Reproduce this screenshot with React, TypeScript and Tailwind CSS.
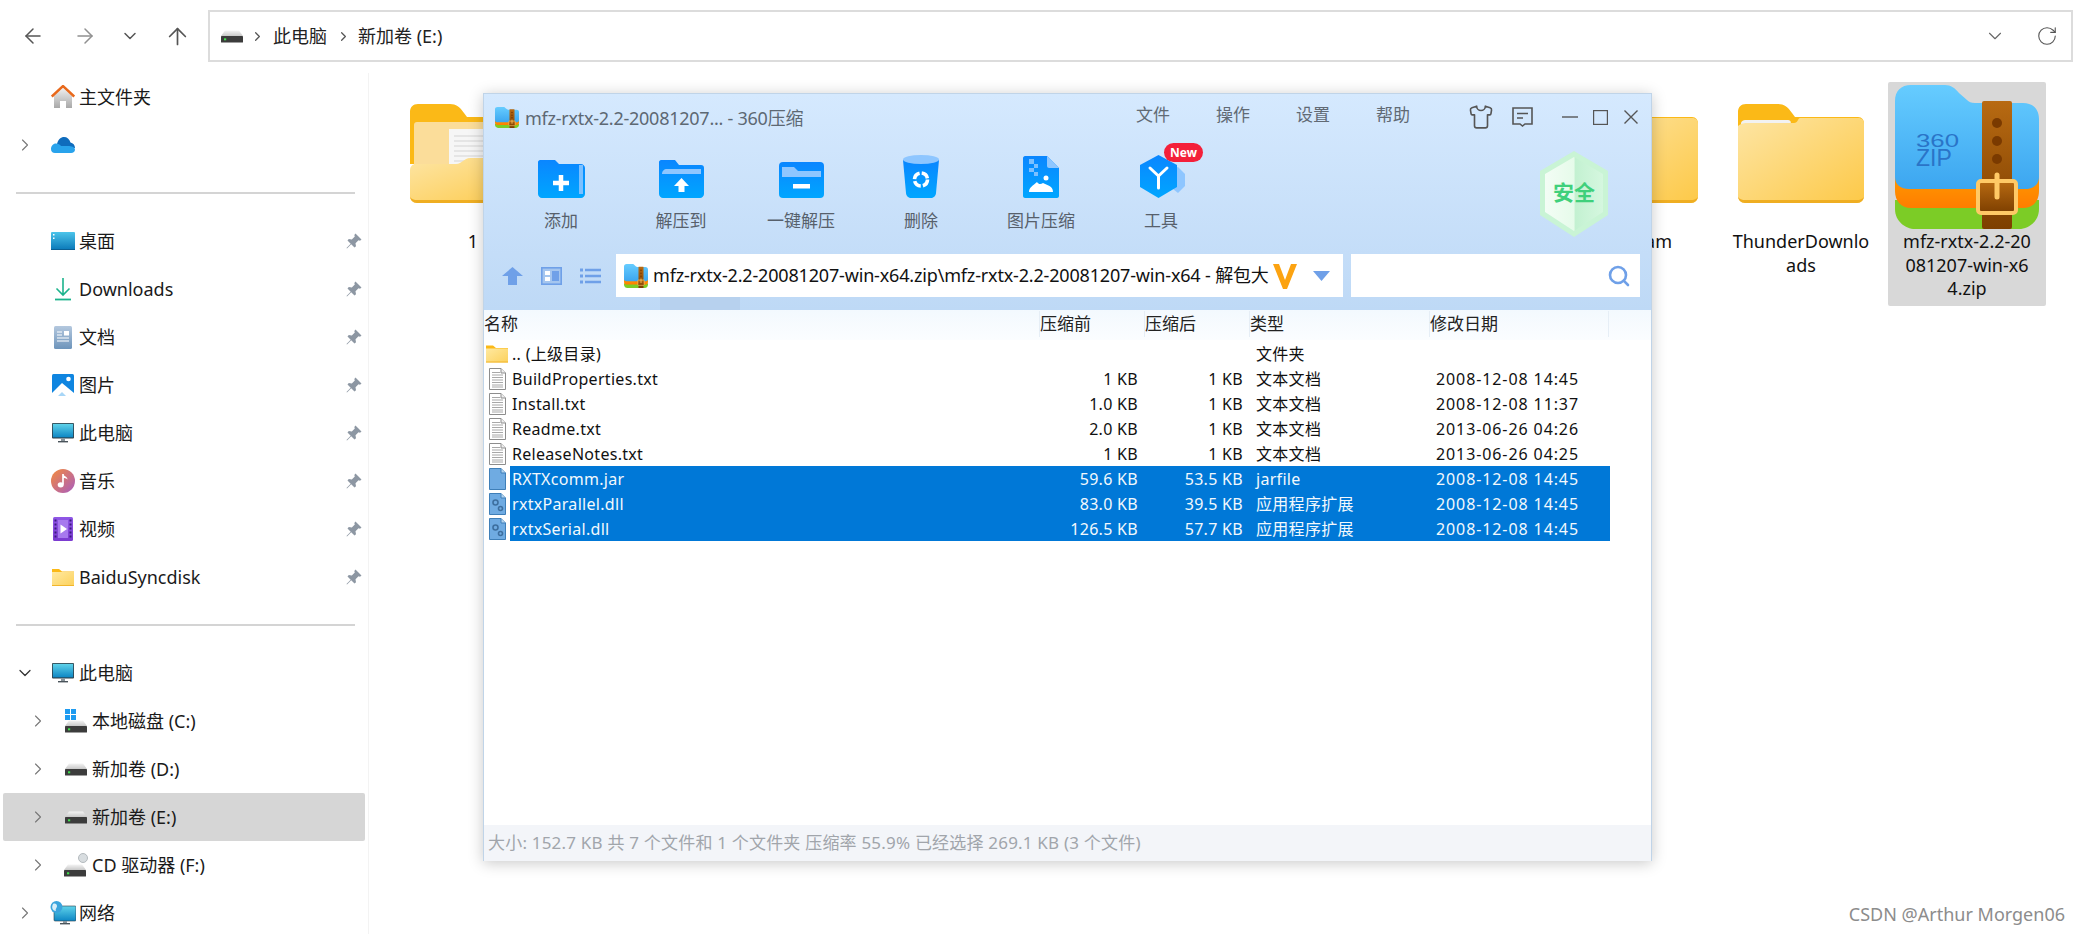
import React from "react";
import { ArrowLeft, ArrowRight, ArrowUp, ChevronDown, ChevronRight, RotateCw, Shirt, Search } from "lucide-react";

const Drive = () => (
  <svg width="22" height="13" viewBox="0 0 22 13">
    <defs><linearGradient id="drv" x1="0" y1="0" x2="0" y2="1"><stop offset="0" stopColor="#f4f4f4" /><stop offset="1" stopColor="#c8c8c8" /></linearGradient></defs>
    <path d="M4 0.5H18L22 6H0Z" fill="url(#drv)" />
    <rect x="0" y="6" width="22" height="6.5" rx="0.6" fill="#3c3c3c" />
    <rect x="3" y="8.3" width="2.2" height="2" fill="#3fe04d" />
  </svg>
);

const Home = () => (
  <svg width="24" height="24" viewBox="0 0 24 24">
    <defs><linearGradient id="hm" x1="0" y1="0" x2="0" y2="1"><stop offset="0" stopColor="#f0f0f0" /><stop offset="1" stopColor="#a8a8a8" /></linearGradient></defs>
    <path d="M12 3L21 11V23H15V16H9V23H3V11Z" fill="url(#hm)" />
    <path d="M0.8 11.5L12 1L23.2 11.5" fill="none" stroke="#e8691c" strokeWidth="2.4" />
  </svg>
);

const OneDrive = () => (
  <svg width="24" height="16" viewBox="0 0 24 16">
    <path d="M6 7C7 2.5 10 0 13 0C16 0 18.5 2 19.5 5.5C22 6 24 8 24 11L12 12Z" fill="#0f6cbd" />
    <path d="M0 12C0 9 2 6.5 5 6.5C7 6.5 9 7.5 10 9L17 9C20 9 24 10 24 12.5C24 14.5 22.5 16 20 16H4C1.5 16 0 14.5 0 12Z" fill="#29a3ec" />
  </svg>
);

const Desktop = () => (
  <svg width="24" height="18" viewBox="0 0 24 18">
    <defs><linearGradient id="dsk" x1="0" y1="0" x2="0" y2="1"><stop offset="0" stopColor="#4cc4ea" /><stop offset="1" stopColor="#0a78b8" /></linearGradient></defs>
    <rect width="24" height="18" rx="1" fill="url(#dsk)" />
    <rect x="2" y="2" width="1.5" height="1.5" fill="#fff" />
    <rect x="2" y="5.5" width="1.5" height="1.5" fill="#fff" />
    <rect x="0" y="17" width="24" height="1" fill="#0a5f94" />
  </svg>
);

const Download = () => (
  <svg width="24" height="24" viewBox="0 0 24 24" fill="none" stroke="#1cb38c" strokeWidth="1.6">
    <path d="M12 1V18M5.5 11.5L12 18L18.5 11.5" />
    <path d="M4 22.5H20" strokeWidth="1.8" />
  </svg>
);

const Docs = () => (
  <svg width="18" height="23" viewBox="0 0 18 23">
    <defs><linearGradient id="doc" x1="0" y1="0" x2="0" y2="1"><stop offset="0" stopColor="#b4c8de" /><stop offset="1" stopColor="#6d94bb" /></linearGradient></defs>
    <rect width="18" height="23" rx="1.5" fill="url(#doc)" />
    <path d="M3 6H8M3 9H8M3 12H15M3 15H15" stroke="#fff" strokeWidth="1.1" />
    <rect x="10" y="5" width="5" height="4.5" fill="#fff" />
  </svg>
);

const Pictures = () => (
  <svg width="22" height="22" viewBox="0 0 22 22">
    <rect width="22" height="22" rx="1.5" fill="#0f85e0" />
    <circle cx="16.5" cy="5" r="2.3" fill="#fff" />
    <path d="M0 19L10 9L22 19V22H0Z" fill="#fff" />
    <path d="M6 22L10 18L14 22Z" fill="#a7d6f7" />
  </svg>
);

const Computer = () => (
  <svg width="22" height="20" viewBox="0 0 22 20">
    <defs><linearGradient id="pc" x1="0" y1="0" x2="0" y2="1"><stop offset="0" stopColor="#5fd3ea" /><stop offset="1" stopColor="#0d86c4" /></linearGradient></defs>
    <rect x="0" y="0" width="22" height="15.5" rx="1" fill="#2d3c46" />
    <rect x="0.8" y="0.8" width="20.4" height="13.6" fill="url(#pc)" />
    <rect x="9" y="15.5" width="4" height="2.5" fill="#8a949b" />
    <rect x="6" y="18" width="10" height="1.4" fill="#4a545b" />
  </svg>
);

const Music = () => (
  <svg width="24" height="24" viewBox="0 0 24 24">
    <defs><linearGradient id="mus" x1="0" y1="0" x2="1" y2="1"><stop offset="0" stopColor="#f58b3c" /><stop offset="1" stopColor="#a85cc0" /></linearGradient></defs>
    <circle cx="12" cy="12" r="12" fill="url(#mus)" />
    <path d="M12 5V15.5" stroke="#fff" strokeWidth="1.7" />
    <path d="M12 5C13 7.5 16.5 7.5 16.5 10.5C15.5 9 13.5 9 12 9Z" fill="#fff" />
    <ellipse cx="9.7" cy="15.8" rx="3" ry="2.6" fill="#fff" />
  </svg>
);

const Video = () => (
  <svg width="20" height="24" viewBox="0 0 20 24">
    <defs><linearGradient id="vid" x1="0" y1="0" x2="0" y2="1"><stop offset="0" stopColor="#8f57e6" /><stop offset="1" stopColor="#7b3bd0" /></linearGradient></defs>
    <rect width="20" height="24" rx="1.5" fill="url(#vid)" />
    <path d="M1.5 3.5H3.5M1.5 7.5H3.5M1.5 11.5H3.5M1.5 15.5H3.5M1.5 19.5H3.5M16.5 3.5H18.5M16.5 7.5H18.5M16.5 11.5H18.5M16.5 15.5H18.5M16.5 19.5H18.5" stroke="#3c1a80" strokeWidth="2" />
    <rect x="5" y="3" width="10" height="18" fill="#a77aee" />
    <path d="M7.5 7.5L14 12L7.5 16.5Z" fill="#fff" />
  </svg>
);

const SmallFolder = ({ w = 22, h = 17 }: { w?: number; h?: number }) => (
  <svg width={w} height={h} viewBox="0 0 22 17">
    <defs><linearGradient id="sf" x1="0" y1="0" x2="1" y2="1"><stop offset="0" stopColor="#ffe9a0" /><stop offset="1" stopColor="#fcd15c" /></linearGradient></defs>
    <path d="M0 0H7L10 2.5H22V4H0Z" fill="#fbb917" />
    <rect y="3" width="22" height="14" fill="url(#sf)" />
    <rect y="16" width="22" height="1" fill="#f2b62c" />
  </svg>
);

const WinDrive = () => (
  <div className="relative w-[22px] h-[24px] flex items-end">
    <Drive />
    <div className="absolute left-0 top-0 grid grid-cols-2 gap-[1px] w-[11px]">
      <span className="h-[5px] bg-[#1e9bf0]" /><span className="h-[5px] bg-[#1e9bf0]" />
      <span className="h-[5px] bg-[#1e9bf0]" /><span className="h-[5px] bg-[#1e9bf0]" />
    </div>
  </div>
);

const CdDrive = () => (
  <div className="relative w-[24px] h-[24px] flex items-end">
    <Drive />
    <span className="absolute right-0 top-0 w-[10px] h-[10px] rounded-full bg-[#d8dde0] border border-[#b4babe]" />
  </div>
);

const Network = () => (
  <svg width="26" height="24" viewBox="0 0 26 24">
    <defs><linearGradient id="net" x1="0" y1="0" x2="0" y2="1"><stop offset="0" stopColor="#5fd3ea" /><stop offset="1" stopColor="#0d86c4" /></linearGradient></defs>
    <rect x="4" y="5" width="22" height="15" rx="1" fill="url(#net)" stroke="#2d3c46" strokeWidth="0.6" />
    <rect x="13" y="20" width="4" height="2" fill="#8a949b" />
    <rect x="10" y="22" width="10" height="1.4" fill="#4a545b" />
    <circle cx="6.5" cy="6" r="6" fill="#3ba4dc" />
    <path d="M3 3C5 2 7 3 7 5S5 8 6 10C3 10 1 7 3 3Z" fill="#d9eef8" />
  </svg>
);

const Pin = () => (
  <svg width="16" height="16" viewBox="0 0 16 16" className="shrink-0">
    <path d="M9.5 0.5L15.5 6.5L14 7.7L12.5 7.2L9.5 10.2L10 13.2L8.5 14.5L5.2 11.2L1 15.5L0.5 15L4.7 10.7L1.5 7.5L2.8 6L5.8 6.5L8.8 3.5L8.3 2Z" fill="#8d97a3" />
  </svg>
);

type Item = { icon: React.ReactNode; label: string; chev?: "r" | "d"; depth?: boolean; pin?: boolean; sel?: boolean };

const SideRow = ({ icon, label, chev, depth, pin, sel }: Item) => (
  <div className={sel ? "h-12 mx-[3px] pr-[3px] flex items-center rounded-[2px] bg-[#d6d6d6]" : "h-12 mx-[3px] pr-[3px] flex items-center"}>
    <div className={depth ? "w-[57px] pl-[13px] flex justify-center shrink-0" : "w-[44px] flex justify-center shrink-0"}>
      {chev === "r" && <ChevronRight size={20} strokeWidth={1.3} className="text-[#777]" />}
      {chev === "d" && <ChevronDown size={20} strokeWidth={1.5} className="text-[#333]" />}
    </div>
    <div className="w-[26px] ml-[3px] flex justify-center items-center shrink-0">{icon}</div>
    <span className="ml-[3px] text-[18px] text-[#1a1a1a] whitespace-nowrap">{label}</span>
    {pin && <span className="ml-auto"><Pin /></span>}
  </div>
);

const Sep = () => (
  <div className="h-12 flex items-center pl-[16px] pr-[13px]">
    <div className="h-[2px] w-full bg-[#d4d4d4]" />
  </div>
);

const Sidebar = () => (
  <div className="w-[369px] shrink-0 border-r border-[#f3f3f3]">
    <SideRow icon={<Home />} label="主文件夹" />
    <SideRow icon={<OneDrive />} label="" chev="r" />
    <Sep />
    <SideRow icon={<Desktop />} label="桌面" pin />
    <SideRow icon={<Download />} label="Downloads" pin />
    <SideRow icon={<Docs />} label="文档" pin />
    <SideRow icon={<Pictures />} label="图片" pin />
    <SideRow icon={<Computer />} label="此电脑" pin />
    <SideRow icon={<Music />} label="音乐" pin />
    <SideRow icon={<Video />} label="视频" pin />
    <SideRow icon={<SmallFolder />} label="BaiduSyncdisk" pin />
    <Sep />
    <SideRow icon={<Computer />} label="此电脑" chev="d" />
    <SideRow icon={<WinDrive />} label="本地磁盘 (C:)" chev="r" depth />
    <SideRow icon={<Drive />} label="新加卷 (D:)" chev="r" depth />
    <SideRow icon={<Drive />} label="新加卷 (E:)" chev="r" depth sel />
    <SideRow icon={<CdDrive />} label="CD 驱动器 (F:)" chev="r" depth />
    <SideRow icon={<Network />} label="网络" chev="r" />
  </div>
);

const BigFolder = ({ id, paper }: { id: string; paper?: boolean }) => (
  <svg width="126" height="99" viewBox="0 0 126 99" className="mb-[7px]">
    <defs>
      <linearGradient id={id} x1="0" y1="0" x2="1" y2="1"><stop offset="0" stopColor="#fde5a4" /><stop offset="1" stopColor="#fdc948" /></linearGradient>
    </defs>
    <path d="M0 8C0 3 3 0 8 0H40C46 0 50 3 54 9L57 13H120C124 13 126 16 126 20V60H0Z" fill="#fbb917" />
    {paper ? (
      <>
        <rect x="4" y="18" width="122" height="50" rx="3" fill="#fbdd9a" />
        <rect x="39" y="25" width="87" height="45" fill="#f6f6f6" />
        <path d="M44 32H126M44 37H126M44 42H126M44 47H126M44 52H126M44 57H126M44 62H126" stroke="#d4d4d4" />
        <path d="M0 66C0 63 2 60 6 60H46C52 60 54 54 60 54H120C124 54 126 56 126 60V92C126 96 123 99 119 99H7C3 99 0 96 0 92Z" fill={`url(#${id})`} />
      </>
    ) : (
      <>
        <path d="M3 20C3 17 5 16 8 16H50C54 16 54 22 48 23H3Z" fill="#f2f2f2" />
        <path d="M0 22C4 19 6 19 10 19H56C60 19 60 14 62 14H120C124 14 126 16 126 20V92C126 96 123 99 119 99H7C3 99 0 96 0 92Z" fill={`url(#${id})`} />
      </>
    )}
    <path d="M0 92C0 96 3 99 7 99H119C123 99 126 96 126 92C126 94 123 96 119 96H7C3 96 0 94 0 92Z" fill="#efae22" />
  </svg>
);

const Zip = ({ id, size, text, h }: { id: string; size: number; text?: boolean; h?: number }) => (
  <svg width={size} height={h ?? size} viewBox="0 0 144 144" preserveAspectRatio="none">
    <defs>
      <linearGradient id={id + "b"} x1="0" y1="0" x2="0" y2="1"><stop offset="0" stopColor="#66ccff" /><stop offset="1" stopColor="#3ca6f0" /></linearGradient>
      <linearGradient id={id + "o"} x1="0" y1="0" x2="0" y2="1"><stop offset="0" stopColor="#ff9d00" /><stop offset="1" stopColor="#ff7d00" /></linearGradient>
      <linearGradient id={id + "k"} x1="0" y1="0" x2="0" y2="1"><stop offset="0" stopColor="#b86a12" /><stop offset="1" stopColor="#7d3f00" /></linearGradient>
    </defs>
    <path d="M0 115H144V124C144 136 134 144 124 144H20C10 144 0 136 0 124Z" fill="#7ccc26" />
    <path d="M0 85H144V106C144 116 138 123 128 123H16C6 123 0 116 0 106Z" fill={`url(#${id}o)`} />
    <path d="M0 16C0 6 6 0 16 0H50C56 0 60 3 64 8L72 15C74 17 76 18 80 18H128C138 18 144 24 144 34V92C144 100 138 104 130 104H14C6 104 0 100 0 92Z" fill={`url(#${id}b)`} />
    <rect x="87" y="16" width="30" height="128" rx="2" fill={`url(#${id}k)`} />
    <circle cx="102" cy="38" r="5" fill="#7a3a00" />
    <circle cx="102" cy="56" r="5" fill="#7a3a00" />
    <circle cx="102" cy="74" r="5" fill="#7a3a00" />
    <rect x="83" y="96" width="38" height="32" rx="3" fill={`url(#${id}k)`} stroke="#ffc966" strokeWidth="4" />
    <path d="M102 90V112" stroke="#ffc966" strokeWidth="5" strokeLinecap="round" />
    {text && (
      <g fill="#2a74c8" fontFamily="'Liberation Sans', sans-serif">
        <text x="21" y="62" fontSize="18" fontWeight="400" textLength="43" lengthAdjust="spacingAndGlyphs">360</text>
        <text x="21" y="81" fontSize="23" fontWeight="400">ZIP</text>
      </g>
    )}
  </svg>
);

const FileItem = ({ icon, lines, sel }: { icon: React.ReactNode; lines: string[]; sel?: boolean }) => (
  <div className={sel ? "w-[158px] h-[224px] shrink-0 flex flex-col items-center pt-[3px] bg-[#d8d8d8] rounded-[2px]" : "w-[158px] h-[224px] shrink-0 flex flex-col items-center pt-[3px]"}>
    <div className="h-[144px] flex items-center justify-center">{icon}</div>
    <div className="mt-[1px] text-[18px] leading-[23.5px] text-[#111] text-center whitespace-nowrap">
      {lines.map((l) => <div key={l}>{l}</div>)}
    </div>
  </div>
);

const Content = () => (
  <div className="flex-1 pt-[9px] pl-[25px] flex gap-[8px] overflow-hidden">
    <FileItem icon={<BigFolder id="f1" paper />} lines={["1"]} />
    <div className="w-[988px] shrink-0" />
    <FileItem icon={<BigFolder id="f2" />} lines={["Program"]} />
    <FileItem icon={<BigFolder id="f3" />} lines={["ThunderDownlo", "ads"]} />
    <FileItem icon={<Zip id="z1" size={144} text />} lines={["mfz-rxtx-2.2-20", "081207-win-x6", "4.zip"]} sel />
  </div>
);

const grad = (id: string) => (
  <defs><linearGradient id={id} x1="0" y1="0" x2="0" y2="1"><stop offset="0" stopColor="#0a86ff" /><stop offset="1" stopColor="#00a6ff" /></linearGradient></defs>
);

const TAdd = () => (
  <svg width="47" height="38" viewBox="0 0 47 38">{grad("ta")}
    <path d="M2 0H17L21 4H43C45 4 47 6 47 8V34C47 36 45 38 43 38H4C2 38 0 36 0 34V2C0 1 1 0 2 0Z" fill="url(#ta)" />
    <rect x="41" y="5" width="4" height="29" fill="#7cc0ff" />
    <path d="M23 15V31M15 23H31" stroke="#fff" strokeWidth="4.5" />
  </svg>
);
const TExtract = () => (
  <svg width="45" height="38" viewBox="0 0 45 38">{grad("te")}
    <path d="M2 0H16L20 5H42C44 5 45 6 45 8V34C45 36 43 38 41 38H4C2 38 0 36 0 34V2C0 1 1 0 2 0Z" fill="url(#te)" />
    <path d="M3 14C3 11 5 9 8 9H42V14Z" fill="#8ec6ff" />
    <path d="M22.5 18L30 26H25.5V32H19.5V26H15Z" fill="#fff" />
  </svg>
);
const TOneKey = () => (
  <svg width="45" height="36" viewBox="0 0 45 36">{grad("to")}
    <rect width="45" height="36" rx="4" fill="url(#to)" />
    <path d="M3 5H15L19 9H42V15H3Z" fill="#8ec6ff" />
    <rect x="14" y="22" width="17" height="4.5" fill="#fff" />
  </svg>
);
const TDelete = () => (
  <svg width="36" height="43" viewBox="0 0 36 43">{grad("td")}
    <path d="M0 5H36L33 38C33 41 30 43 28 43H8C6 43 3 41 3 38Z" fill="url(#td)" />
    <ellipse cx="18" cy="4.5" rx="18" ry="4.5" fill="#8ec6ff" />
    <circle cx="18" cy="24.5" r="6.5" fill="none" stroke="#fff" strokeWidth="3.6" strokeDasharray="8 2.2" />
  </svg>
);
const TImage = () => (
  <svg width="36" height="42" viewBox="0 0 36 42">{grad("ti")}
    <path d="M2 0H24L36 12V40C36 41 35 42 34 42H2C1 42 0 41 0 40V2C0 1 1 0 2 0Z" fill="url(#ti)" />
    <path d="M24 0L36 12H26C25 12 24 11 24 10Z" fill="#8ec6ff" />
    <path d="M6 3H11V8H6ZM11 8H15V12H11ZM6 12H11V16H6ZM11 16H15V20H11Z" fill="#7cc0ff" />
    <path d="M6 36C6 31 10 30 14 26C16 29 18 28 20 27C24 29 30 30 30 36Z" fill="#fff" />
    <circle cx="23" cy="22" r="2.5" fill="#fff" />
  </svg>
);
const TTool = () => (
  <svg width="46" height="43" viewBox="0 0 46 43" className="ml-[4px]">{grad("tt")}
    <path d="M28 16L38 12L45 19V31L38 38L28 30Z" fill="#8ec6ff" />
    <path d="M18.5 0L37 10V32L18.5 43L0 32V10Z" fill="url(#tt)" />
    <path d="M18.5 21L10 13M18.5 21L27 13M18.5 21V33" stroke="#fff" strokeWidth="3" fill="none" strokeLinecap="round" />
  </svg>
);

const Tool = ({ icon, label, badge }: { icon: React.ReactNode; label: string; badge?: boolean }) => (
  <div className="w-[120px] flex flex-col items-center shrink-0">
    <div className="relative h-[42px] flex items-end justify-center">
      {icon}
      {badge && (
        <span className="absolute -top-[13px] left-[28px] w-[39px] h-[19px] rounded-full bg-[#f4203a] text-white text-[12px] leading-[19px] text-center font-bold">New</span>
      )}
    </div>
    <div className="mt-[11px] h-[25px] leading-[24px] text-[17px] text-[#57606b] whitespace-nowrap">{label}</div>
  </div>
);

const Shield = () => (
  <svg width="68" height="86" viewBox="0 0 68 86" className="-mt-[5px] -mb-[3px] shrink-0">
    <defs>
      <linearGradient id="sh" x1="0" y1="0" x2="1" y2="0"><stop offset="0" stopColor="#f3fdf5" /><stop offset="0.5" stopColor="#e6fbea" /><stop offset="0.52" stopColor="#c3f1d1" /><stop offset="1" stopColor="#d5f7df" /></linearGradient>
    </defs>
    <path d="M34 0L68 20V64L34 86L0 64V20Z" fill="#c9f4d5" />
    <path d="M34 6L63 23V61L34 80L5 61V23Z" fill="url(#sh)" />
    <text x="34" y="49" textAnchor="middle" fontSize="21" fontWeight="700" fill="#3fd07b">安全</text>
  </svg>
);

const ChatIcon = () => (
  <svg width="21" height="22" viewBox="0 0 21 22" fill="none" stroke="#555" strokeWidth="1.6">
    <path d="M1 2H20V18H13L10.5 20L8 18H1Z" />
    <path d="M5 7.5H16M5 12H11" />
  </svg>
);

const FileIcon = ({ kind }: { kind: "txt" | "jar" | "dll" }) => {
  const sel = kind !== "txt";
  return (
    <svg width="17" height="22" viewBox="0 0 17 22">
      <path d="M0.5 0.5H12L16.5 5V21.5H0.5Z" fill={sel ? "#6fabe2" : "#fff"} stroke={sel ? "#3f7fb8" : "#8d8d8d"} />
      <path d="M12 0.5V5H16.5" fill={sel ? "#b5d5f0" : "#eee"} stroke={sel ? "#3f7fb8" : "#8d8d8d"} />
      {kind === "txt" && <path d="M3 4.5H11M3 7H14M3 9.5H14M3 12H14M3 14.5H14M3 17H14M3 19H14" stroke="#a8a8a8" />}
      {kind === "dll" && (
        <g fill="none" stroke="#3d6f9f" strokeWidth="1.6">
          <circle cx="6.5" cy="9.5" r="2.5" />
          <circle cx="11.5" cy="15.5" r="2" />
        </g>
      )}
    </svg>
  );
};

const rows: { kind: "dir" | "txt" | "jar" | "dll"; name: string; a: string; b: string; t: string; d: string; sel?: boolean }[] = [
  { kind: "dir", name: ".. (上级目录)", a: "", b: "", t: "文件夹", d: "" },
  { kind: "txt", name: "BuildProperties.txt", a: "1 KB", b: "1 KB", t: "文本文档", d: "2008-12-08 14:45" },
  { kind: "txt", name: "Install.txt", a: "1.0 KB", b: "1 KB", t: "文本文档", d: "2008-12-08 11:37" },
  { kind: "txt", name: "Readme.txt", a: "2.0 KB", b: "1 KB", t: "文本文档", d: "2013-06-26 04:26" },
  { kind: "txt", name: "ReleaseNotes.txt", a: "1 KB", b: "1 KB", t: "文本文档", d: "2013-06-26 04:25" },
  { kind: "jar", name: "RXTXcomm.jar", a: "59.6 KB", b: "53.5 KB", t: "jarfile", d: "2008-12-08 14:45", sel: true },
  { kind: "dll", name: "rxtxParallel.dll", a: "83.0 KB", b: "39.5 KB", t: "应用程序扩展", d: "2008-12-08 14:45", sel: true },
  { kind: "dll", name: "rxtxSerial.dll", a: "126.5 KB", b: "57.7 KB", t: "应用程序扩展", d: "2008-12-08 14:45", sel: true },
];

const ListRow = (r: (typeof rows)[number]) => (
  <div className="flex h-[25px] items-center">
    <div className="w-[26px] shrink-0 flex justify-center items-center">
      {r.kind === "dir" ? <SmallFolder w={22} h={18} /> : <FileIcon kind={r.kind} />}
    </div>
    <div className={r.sel ? "flex h-[25px] items-center w-[1100px] bg-[#0078d7] text-[#f2f8fd]" : "flex h-[25px] items-center w-[1100px] text-[#111]"}>
      <div className="w-[500px] pl-[2px] whitespace-nowrap">{r.name}</div>
      <div className="w-[128px] text-right whitespace-nowrap">{r.a}</div>
      <div className="w-[105px] text-right whitespace-nowrap">{r.b}</div>
      <div className="w-[193px] pl-[13px] whitespace-nowrap">{r.t}</div>
      <div className="w-[174px] whitespace-nowrap tracking-[0.9px]">{r.d}</div>
    </div>
  </div>
);

const Window360 = () => (
  <div className="absolute left-[483px] top-[93px] w-[1169px] h-[768px] flex flex-col border-x border-t border-[#c0d4e8] bg-white shadow-[0_2px_14px_rgba(0,0,0,0.22)]">
    <div className="bg-gradient-to-b from-[#d5e9fe] to-[#bed9f6]">
      <div className="h-[46px] pl-[11px] flex items-center">
        <Zip id="z2" size={24} h={21} />
        <span className="ml-[6px] mt-[3px] text-[18px] tracking-[-0.25px] text-[#5d6873] whitespace-nowrap">mfz-rxtx-2.2-20081207... - 360压缩</span>
        <div className="ml-auto flex items-center mb-[4px] text-[17px] text-[#616a74]">
          {["文件", "操作", "设置", "帮助"].map((m) => <span key={m} className="w-[80px]">{m}</span>)}
        </div>
        <Shirt size={26} strokeWidth={1.5} className="ml-[12px] text-[#555] shrink-0" />
        <span className="ml-[18px]"><ChatIcon /></span>
        <svg width="16" height="16" viewBox="0 0 16 16" className="ml-[29px] shrink-0" fill="none" stroke="#555" strokeWidth="1.4"><path d="M0 8H16" /></svg>
        <svg width="15" height="15" viewBox="0 0 15 15" className="ml-[15px] shrink-0" fill="none" stroke="#555" strokeWidth="1.2"><rect x="0.6" y="0.6" width="13.8" height="13.8" /></svg>
        <svg width="14" height="14" viewBox="0 0 14 14" className="ml-[16px] mr-[13px] shrink-0" fill="none" stroke="#555" strokeWidth="1.4"><path d="M0.5 0.5L13.5 13.5M13.5 0.5L0.5 13.5" /></svg>
      </div>
      <div className="mt-[16px] pl-[17px] flex items-start">
        <Tool icon={<TAdd />} label="添加" />
        <Tool icon={<TExtract />} label="解压到" />
        <Tool icon={<TOneKey />} label="一键解压" />
        <Tool icon={<TDelete />} label="删除" />
        <Tool icon={<TImage />} label="图片压缩" />
        <Tool icon={<TTool />} label="工具" badge />
        <div className="ml-auto mr-[43px] h-[78px]"><Shield /></div>
      </div>
      <div className="mt-[20px] h-[43px] pl-[18px] flex items-center">
        <svg width="21" height="18" viewBox="0 0 21 18" className="shrink-0"><path d="M10.5 0L21 9H15V18H6V9H0Z" fill="#6fa0e8" /></svg>
        <svg width="21" height="18" viewBox="0 0 21 18" className="ml-[18px] shrink-0"><rect x="0.8" y="0.8" width="19.4" height="16.4" fill="#a5c6ef" stroke="#6fa0e8" strokeWidth="1.6" /><rect x="4" y="4" width="5" height="4" fill="#fff" /><rect x="4" y="10" width="5" height="4" fill="#fff" /><rect x="11" y="4" width="7" height="10" fill="#6fa0e8" /></svg>
        <svg width="21" height="16" viewBox="0 0 21 16" className="ml-[18px] shrink-0"><path d="M5 2H21M5 8H21M5 14H21" stroke="#6fa0e8" strokeWidth="2.4" /><path d="M0 2H3M0 8H3M0 14H3" stroke="#6fa0e8" strokeWidth="2.8" /></svg>
        <div className="ml-[15px] w-[727px] h-[43px] bg-white flex items-center pl-[8px] shrink-0">
          <Zip id="z3" size={24} h={24} />
          <div className="ml-[5px] w-[616px] overflow-hidden whitespace-nowrap text-[18px] tracking-[-0.17px] text-[#111]">mfz-rxtx-2.2-20081207-win-x64.zip\mfz-rxtx-2.2-20081207-win-x64 - 解包大小为 269.1 KB</div>
          <svg width="24" height="26" viewBox="0 0 24 26" className="ml-[4px] shrink-0"><path d="M0 1H6L12 17L18 1H24L14 26H10Z" fill="#fca311" /></svg>
          <svg width="17" height="10" viewBox="0 0 17 10" className="ml-[16px] shrink-0"><path d="M0 0H17L8.5 10Z" fill="#6fa0e8" /></svg>
        </div>
        <div className="ml-[8px] w-[289px] h-[43px] bg-white flex items-center justify-end pr-[9px] shrink-0">
          <Search size={24} strokeWidth={2.6} className="text-[#6fa0e8]" />
        </div>
      </div>
      <div className="h-[13px] pl-[176px]"><div className="w-[80px] h-[13px] bg-[#b7d1ee]" /></div>
    </div>
    <div className="h-[30px] pt-[1px] flex items-start bg-gradient-to-b from-[#f3f9fe] to-[#fbfdff] text-[17px] text-[#222]">
      <div className="w-[555px]">名称</div>
      <div className="w-[105px] border-l border-[#e6eef6]">压缩前</div>
      <div className="w-[105px] border-l border-[#e6eef6]">压缩后</div>
      <div className="w-[180px] border-l border-[#e6eef6]">类型</div>
      <div className="w-[180px] border-x border-[#e6eef6]">修改日期</div>
    </div>
    <div className="flex-1 pt-[1px] text-[16px] tracking-[0.3px]">
      {rows.map((r) => <ListRow key={r.name} {...r} />)}
    </div>
    <div className="h-[36px] flex items-center pl-[4px] bg-[#f3f5f9] text-[17px] tracking-[0.2px] text-[#a1a5ab] whitespace-nowrap">大小: 152.7 KB 共 7 个文件和 1 个文件夹 压缩率 55.9% 已经选择 269.1 KB (3 个文件)</div>
  </div>
);

const TopBar = () => (
  <div className="h-[73px] pl-[7px] pt-[10px] flex items-start">
    <div className="h-[52px] w-[52px] flex items-center justify-center"><ArrowLeft size={24} strokeWidth={1.5} className="text-[#555]" /></div>
    <div className="h-[52px] w-[52px] flex items-center justify-center"><ArrowRight size={24} strokeWidth={1.5} className="text-[#909090]" /></div>
    <div className="h-[52px] w-[38px] flex items-center justify-center"><ChevronDown size={20} strokeWidth={1.8} className="text-[#555]" /></div>
    <div className="h-[52px] w-[56px] flex items-center justify-center"><ArrowUp size={27} strokeWidth={1.5} className="text-[#555]" /></div>
    <div className="ml-[3px] w-[1865px] h-[52px] border-2 border-[#dcdcdc] flex items-center pl-[11px] pr-[13px] text-[18px] text-[#222]">
      <Drive />
      <ChevronRight size={15} strokeWidth={2} className="ml-[7px] text-[#555]" />
      <span className="ml-[8px]">此电脑</span>
      <ChevronRight size={15} strokeWidth={2} className="ml-[9px] text-[#555]" />
      <span className="ml-[7px]">新加卷 (E:)</span>
      <ChevronDown size={22} strokeWidth={1.2} className="ml-auto text-[#666]" />
      <RotateCw size={22} strokeWidth={1.2} className="ml-[30px] text-[#555]" />
    </div>
  </div>
);

export default function App() {
  return (
    <div className="relative w-[2080px] h-[934px] overflow-hidden bg-white font-['Noto_Sans','Noto_Sans_CJK_SC',sans-serif]">
      <TopBar />
      <div className="flex h-[861px]">
        <Sidebar />
        <Content />
      </div>
      <Window360 />
      <div className="absolute right-[15px] bottom-[6px] text-[18px] text-[#8c8c8c] whitespace-nowrap">CSDN @Arthur Morgen06</div>
    </div>
  );
}
